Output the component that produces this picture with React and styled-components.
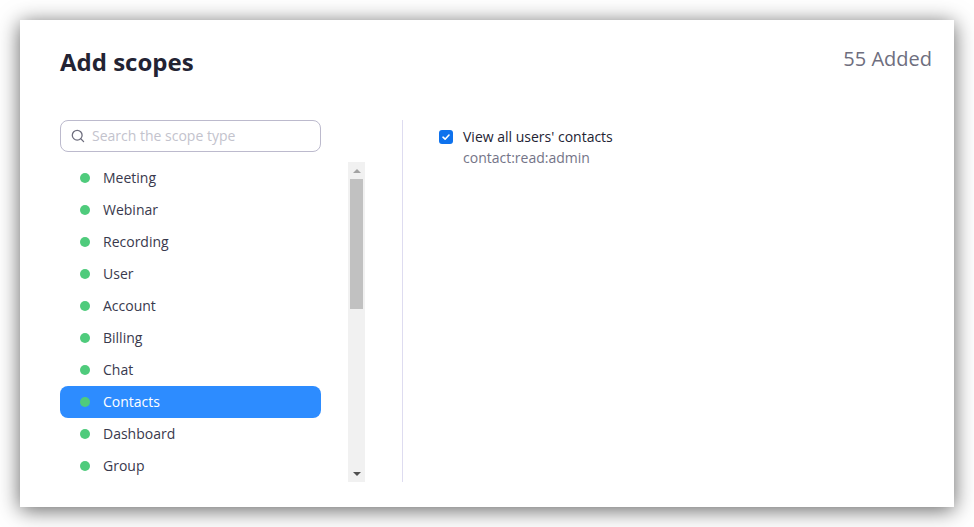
import React from "react";
import styled, { createGlobalStyle } from "styled-components";

const GlobalStyle = createGlobalStyle`
  html, body {
    margin: 0;
    padding: 0;
    background: #ffffff;
  }
  body {
    padding: 20px;
    font-family: "Open Sans", "Liberation Sans", sans-serif;
  }
`;

const scopes = [
  "Meeting",
  "Webinar",
  "Recording",
  "User",
  "Account",
  "Billing",
  "Chat",
  "Contacts",
  "Dashboard",
  "Group",
];

const Card = styled.div`
  width: 934px;
  height: 487px;
  box-sizing: border-box;
  background: #fff;
  box-shadow: 0 3px 20px rgba(0, 0, 0, 0.62);
  padding: 26px 22px 25px 40px;
  display: flex;
  flex-direction: column;
`;

const Header = styled.div`
  display: flex;
  justify-content: space-between;
  align-items: flex-start;
`;

const Title = styled.h1`
  margin: 0;
  font-size: 24px;
  line-height: 32px;
  font-weight: 700;
  color: #232333;
`;

const Count = styled.div`
  font-size: 20px;
  line-height: 26px;
  color: #6e6e7e;
`;

const Body = styled.div`
  margin-top: 42px;
  display: flex;
  flex: 1;
`;

const LeftColumn = styled.div`
  width: 342px;
  border-right: 1px solid #dedcf0;
  display: flex;
  flex-direction: column;
`;

const SearchBox = styled.label`
  width: 261px;
  height: 32px;
  box-sizing: border-box;
  border: 1px solid #bcbacd;
  border-radius: 8px;
  display: flex;
  align-items: center;
  padding: 0 0 2px 10px;
  gap: 7px;
  color: #6e6e7e;
`;

const SearchInput = styled.input`
  border: none;
  outline: none;
  background: transparent;
  font-family: inherit;
  font-size: 14px;
  color: #232333;
  flex: 1;
  min-width: 0;
  padding: 0;
  &::placeholder {
    color: #c3c3cd;
  }
`;

const ListArea = styled.div`
  margin-top: 10px;
  height: 320px;
  width: 305px;
  display: flex;
  justify-content: space-between;
`;

const List = styled.ul`
  list-style: none;
  margin: 0;
  padding: 0;
  width: 261px;
  overflow: hidden;
`;

const Row = styled.li`
  height: 32px;
  box-sizing: border-box;
  display: flex;
  align-items: center;
  gap: 13px;
  padding: 0 0 2px 20px;
  border-radius: 8px;
  font-size: 14px;
  color: ${p => (p.$active ? "#ffffff" : "#39394d")};
  background: ${p => (p.$active ? "#2d8cff" : "transparent")};
  cursor: pointer;
`;

const Dot = styled.span`
  width: 10px;
  height: 10px;
  margin-top: 2px;
  border-radius: 50%;
  background: #4fcb7c;
  flex-shrink: 0;
`;

const Scrollbar = styled.div`
  width: 17px;
  background: #f1f1f1;
  display: flex;
  flex-direction: column;
`;

const ScrollButton = styled.div`
  height: 17px;
  display: flex;
  align-items: center;
  justify-content: center;
  &::after {
    content: "";
    width: 0;
    height: 0;
    border-left: 4px solid transparent;
    border-right: 4px solid transparent;
    ${p =>
      p.$down
        ? "border-top: 4px solid #505050;"
        : "border-bottom: 4px solid #a3a3a3;"}
  }
`;

const Track = styled.div`
  flex: 1;
  padding: 0 2px;
`;

const Thumb = styled.div`
  height: 130px;
  background: #c1c1c1;
`;

const RightColumn = styled.div`
  flex: 1;
  padding: 7px 0 0 36px;
`;

const ScopeItem = styled.div`
  display: flex;
  flex-direction: column;
`;

const CheckRow = styled.label`
  display: flex;
  align-items: center;
  gap: 10px;
  font-size: 14px;
  line-height: 20px;
  color: #232333;
`;

const CheckBox = styled.span`
  width: 14px;
  height: 14px;
  border-radius: 3px;
  background: #0e72ed;
  display: flex;
  align-items: center;
  justify-content: center;
  flex-shrink: 0;
`;

const ScopeName = styled.div`
  margin-left: 24px;
  font-size: 14px;
  line-height: 22px;
  color: #747487;
`;

const SearchIcon = () => (
  <svg width="14" height="14" viewBox="0 0 14 14" fill="none" style={{ marginTop: 2 }}>
    <circle cx="6.2" cy="6.2" r="4.9" stroke="#6e6e7e" strokeWidth="1.3" />
    <path d="M9.8 9.8 L12.6 12.6" stroke="#6e6e7e" strokeWidth="1.3" strokeLinecap="round" />
  </svg>
);

const CheckIcon = () => (
  <svg width="10" height="10" viewBox="0 0 10 10" fill="none">
    <path d="M2 5.2 L4.1 7.2 L8 3" stroke="#fff" strokeWidth="1.6" strokeLinecap="round" strokeLinejoin="round" />
  </svg>
);

const App = () => {
  return (
    <>
      <GlobalStyle />
      <Card>
        <Header>
          <Title>Add scopes</Title>
          <Count>55 Added</Count>
        </Header>
        <Body>
          <LeftColumn>
            <SearchBox>
              <SearchIcon />
              <SearchInput placeholder="Search the scope type" />
            </SearchBox>
            <ListArea>
              <List>
                {scopes.map(name => (
                  <Row key={name} $active={name === "Contacts"}>
                    <Dot />
                    {name}
                  </Row>
                ))}
              </List>
              <Scrollbar>
                <ScrollButton />
                <Track>
                  <Thumb />
                </Track>
                <ScrollButton $down />
              </Scrollbar>
            </ListArea>
          </LeftColumn>
          <RightColumn>
            <ScopeItem>
              <CheckRow>
                <CheckBox>
                  <CheckIcon />
                </CheckBox>
                View all users' contacts
              </CheckRow>
              <ScopeName>contact:read:admin</ScopeName>
            </ScopeItem>
          </RightColumn>
        </Body>
      </Card>
    </>
  );
};

export default App;
